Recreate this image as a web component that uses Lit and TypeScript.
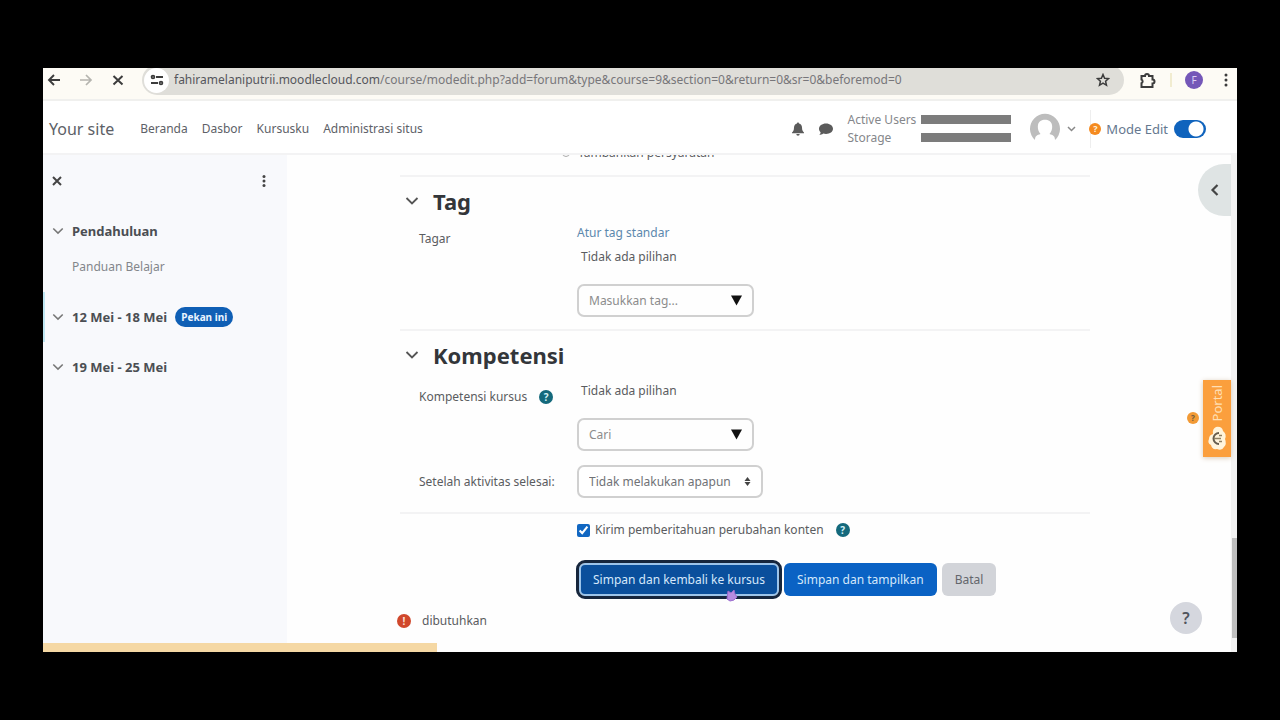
import { LitElement, html, css } from "lit";
import { customElement } from "lit/decorators.js";

const chevron = html`<svg class="chev" viewBox="0 0 14 14" aria-hidden="true"><path d="M1.5 4 7 9.5 12.5 4" fill="none" stroke="currentColor" stroke-width="1.8"/></svg>`;
const cross = html`<svg class="ic" viewBox="0 0 12 12" aria-hidden="true"><path d="M2 2l8 8M10 2l-8 8" fill="none" stroke="currentColor" stroke-width="2"/></svg>`;
const dots = html`<svg class="ic" viewBox="0 0 12 12" aria-hidden="true"><g fill="currentColor"><circle cx="6" cy="1.5" r="1.5"/><circle cx="6" cy="6" r="1.5"/><circle cx="6" cy="10.5" r="1.5"/></g></svg>`;

@customElement("browser-bar")
class BrowserBar extends LitElement {
  static styles = css`
    :host { display: block; }
    .bar { display: flex; align-items: center; height: 33px; padding: 0 4px 7px 4px; box-sizing: border-box; background: #fdfbf5; color: #3c3c3c; border-bottom: 2px solid #f0f0ee; }
    button { border: 0; background: none; padding: 0; color: inherit; display: grid; place-items: center; font: inherit; }
    .nav { display: flex; gap: 18px; }
    .dim { color: #b5b4af; }
    .ic { width: 14px; height: 14px; display: block; }
    .pill { flex: 1; min-width: 0; height: 30px; box-sizing: border-box; margin-left: 17px; padding: 0 14px 0 2px; display: flex; align-items: center; gap: 5px; background: #dfded9; border-radius: 15px; }
    .site { width: 25px; height: 25px; border-radius: 50%; background: #fff; }
    .url { flex: 1; min-width: 0; font: 12px/18px "Noto Sans", "Open Sans", sans-serif; color: #77767a; white-space: nowrap; overflow: hidden; }
    .host { color: #55565c; }
    .tools { display: flex; align-items: center; padding-left: 15px; }
    .big { width: 17px; height: 17px; display: block; }
    .sep { width: 2px; height: 14px; margin: 0 13px 0 14px; background: #f1ecd0; }
    .me { width: 18px; height: 18px; border-radius: 50%; background: #7457b8; color: #ddd0f5; font: 10px/18px "Noto Sans", sans-serif; }
    .more { margin-left: 16px; }
  `;
  render() {
    return html`<div class="bar">
      <div class="nav">
        <button aria-label="Kembali"><svg class="ic" viewBox="0 0 14 14"><path d="M13 7H2M7 2 2 7l5 5" fill="none" stroke="currentColor" stroke-width="1.9"/></svg></button>
        <button class="dim" aria-label="Maju"><svg class="ic" viewBox="0 0 14 14"><path d="M1 7h11M7 2l5 5-5 5" fill="none" stroke="currentColor" stroke-width="1.7"/></svg></button>
        <button aria-label="Hentikan"><svg class="ic" viewBox="0 0 14 14"><path d="M2.5 3l9 8.5M11.5 3l-9 8.5" fill="none" stroke="currentColor" stroke-width="2"/></svg></button>
      </div>
      <div class="pill">
        <button class="site" aria-label="Info situs"><svg class="ic" viewBox="0 0 14 14"><g fill="none" stroke="currentColor" stroke-width="1.8"><path d="M6 4h7M1 10h7"/><circle cx="3" cy="4" r="1.4"/><circle cx="11" cy="10" r="1.4"/></g></svg></button>
        <div class="url"><span class="host">fahiramelaniputrii.moodlecloud.com</span>/course/modedit.php?add=forum&amp;type&amp;course=9&amp;section=0&amp;return=0&amp;sr=0&amp;beforemod=0</div>
        <button aria-label="Bookmark"><svg class="ic" viewBox="0 0 14 14"><path d="M7 1.5l1.600 3.700 4 .4-3 2.700.9 4L7 10.200l-3.500 2.100.9-4-3-2.700 4-.4z" fill="none" stroke="currentColor" stroke-width="1.5"/></svg></button>
      </div>
      <div class="tools">
        <button aria-label="Ekstensi"><svg class="big" viewBox="0 0 17 17"><path d="M2.500 4h3.500a2 2 0 0 1 4 0h3.500v3.500a2 2 0 0 1 0 4v3.500h-11v-3.800a2 2 0 0 0 0-3.600z" fill="none" stroke="currentColor" stroke-width="2"/></svg></button>
        <span class="sep"></span>
        <button class="me" aria-label="Profil">F</button>
        <button class="more" aria-label="Menu"><svg class="ic" viewBox="0 0 14 14"><g fill="currentColor"><circle cx="7" cy="2" r="1.5"/><circle cx="7" cy="7" r="1.5"/><circle cx="7" cy="12" r="1.5"/></g></svg></button>
      </div>
    </div>`;
  }
}

@customElement("site-header")
class SiteHeader extends LitElement {
  static styles = css`
    :host { display: block; }
    header { display: flex; align-items: center; height: 54px; box-sizing: border-box; padding: 3px 31px 0 6px; background: #fff; border-bottom: 2px solid #f3f3f4; color: #5d6167; font: 12px/18px "Noto Sans", "Open Sans", sans-serif; }
    a { color: inherit; text-decoration: none; }
    .brand { font-size: 16px; margin-right: 26px; }
    nav { display: flex; gap: 14px; flex: 1; }
    button { border: 0; background: none; padding: 0; color: #5b5b5b; display: grid; place-items: center; }
    .icons { display: flex; gap: 14px; margin-right: 15px; }
    .ic { width: 14px; height: 14px; display: block; }
    .stats { display: grid; grid-template-columns: auto 90px; column-gap: 5px; align-items: center; color: #85878b; }
    .meter { height: 9px; background: #7c7c7c; }
    .user { display: flex; align-items: center; gap: 6px; margin: 0 14px 0 18px; }
    .avatar { width: 32px; height: 32px; display: block; }
    .small { width: 9px; height: 9px; display: block; }
    .edit { display: flex; align-items: center; height: 38px; border-left: 1px solid #eee; color: #66788f; font-size: 13px; }
    .mark { width: 12px; height: 12px; margin: 0 5px 0 -2px; border-radius: 50%; background: #f58a1f; color: #fff2dc; font: bold 9px/12px "Noto Sans", sans-serif; text-align: center; }
    .switch { appearance: none; margin: 0 0 0 6px; width: 32px; height: 18px; border-radius: 9px; background: radial-gradient(circle at 22px 9px, #fff 7px, transparent 8px), #0f63bd; }
  `;
  render() {
    return html`<header>
      <a class="brand" href="#">Your site</a>
      <nav><a href="#">Beranda</a><a href="#">Dasbor</a><a href="#">Kursusku</a><a href="#">Administrasi situs</a></nav>
      <div class="icons">
        <button aria-label="Notifikasi"><svg class="ic" viewBox="0 0 14 14"><path d="M7 .5c.7 0 1 .5 1 1 2 .5 3 2.200 3 4 0 3 1 4 2 5v.8H1v-.8c1-1 2-2 2-5 0-1.800 1-3.500 3-4 0-.5.300-1 1-1zM5.300 12h3.400a1.700 1.700 0 0 1-3.400 0z" fill="currentColor"/></svg></button>
        <button aria-label="Pesan"><svg class="ic" viewBox="0 0 14 14"><path d="M7 1.500c4 0 7 2.300 7 5.300s-3 5.200-7 5.200c-1 0-1.900-.1-2.700-.4C3 12.600 1.500 13 .3 13c1-1 1.300-2 1.300-2.700C.6 9.400 0 8.200 0 6.800c0-3 3-5.300 7-5.300z" fill="currentColor"/></svg></button>
      </div>
      <div class="stats"><span>Active Users</span><span class="meter"></span><span>Storage</span><span class="meter"></span></div>
      <button class="user" aria-label="Menu pengguna">
        <svg class="avatar" viewBox="0 0 32 32"><path d="M6 27A15 15 0 1 1 26 27C26 23 24 22 20.500 21 23 18 23.500 15 23 12c-1-7-13-7-14 0-.5 3 0 6 2.500 9C8 22 6 23 6 27z" fill="#bdbdbd"/></svg>
        <svg class="small" viewBox="0 0 9 9"><path d="M1 3l3.500 3.500L8 3" fill="none" stroke="#888" stroke-width="1.5"/></svg>
      </button>
      <div class="edit"><span class="mark">?</span><label for="mode">Mode Edit</label><input id="mode" class="switch" type="checkbox" role="switch" checked></div>
    </header>`;
  }
}

@customElement("course-index")
class CourseIndex extends LitElement {
  static styles = css`
    :host { display: block; background: #f8f9fc; color: #4b4e53; font: 13px/20px "Noto Sans", "Open Sans", sans-serif; }
    .top { display: flex; justify-content: space-between; padding: 17px 17px 31px 8px; }
    button { border: 0; background: none; padding: 0; color: #444; display: grid; place-items: center; }
    .ic { width: 12px; height: 12px; display: block; margin: 3px 0; }
    .row { display: flex; align-items: center; gap: 8px; font-weight: 700; padding-left: 9px; height: 20px; }
    .chev { width: 12px; height: 12px; display: block; color: #777; }
    a { color: inherit; text-decoration: none; }
    .item { display: block; padding: 16px 0 0 29px; color: #83868b; font-size: 12px; }
    .current { margin: 15px 0; padding: 15px 0 15px 7px; border-left: 2px solid #bfe6f2; }
    .badge { background: #0f5fb5; color: #eaf4ff; font-size: 10px; line-height: 20px; padding: 0 6px; border-radius: 10px; }
  `;
  render() {
    return html`<div class="top"><button aria-label="Tutup">${cross}</button><button aria-label="Opsi">${dots}</button></div>
      <div class="row"><button aria-label="Ciutkan">${chevron}</button><a href="#">Pendahuluan</a></div>
      <a class="item" href="#">Panduan Belajar</a>
      <div class="row current"><button aria-label="Ciutkan">${chevron}</button><a href="#">12 Mei - 18 Mei</a><span class="badge">Pekan ini</span></div>
      <div class="row"><button aria-label="Ciutkan">${chevron}</button><a href="#">19 Mei - 25 Mei</a></div>`;
  }
}

@customElement("activity-form")
class ActivityForm extends LitElement {
  static styles = css`
    :host { display: block; min-width: 0; color: #5a5c60; font: 12px/20px "Noto Sans", "Open Sans", sans-serif; }
    form { margin: 0 141px 0 113px; }
    .cut { height: 20px; margin-left: 160px; display: flex; align-items: end; overflow: hidden; }
    .cutline { display: flex; align-items: center; gap: 8px; height: 44px; }
    .ring { width: 8px; height: 8px; box-sizing: border-box; border: 1px solid #aaa; border-radius: 50%; margin-left: 2px; }
    section { border-top: 2px solid #f3f3f4; }
    h2 { display: flex; align-items: center; gap: 14px; margin: 0; padding: 8px 0 4px 5px; font-size: 22px; line-height: 32px; font-weight: 700; color: #33363a; }
    h2 button, .help { border: 0; padding: 0; background: none; display: grid; place-items: center; }
    .chev { width: 14px; height: 14px; display: block; color: #555; }
    .row { display: grid; grid-template-columns: 158px minmax(0, 1fr); padding-left: 19px; }
    .name { display: flex; align-items: center; gap: 12px; height: 36px; }
    .help { width: 14px; height: 14px; border-radius: 50%; background: #14697c; color: #d3f1f7; font: bold 10px/14px "Noto Sans", sans-serif; }
    .none { padding-left: 4px; line-height: 24px; margin-bottom: 15px; }
    a { display: block; color: #5c88ad; text-decoration: none; line-height: 24px; }
    .field { display: flex; align-items: center; width: 177px; height: 33px; box-sizing: border-box; border: 2px solid #d0d0d0; border-radius: 7px; padding: 0 10px; }
    .field input { flex: 1; min-width: 0; border: 0; outline: 0; padding: 0; background: none; font: inherit; color: inherit; }
    .field input::placeholder { color: #8c8c8c; opacity: 1; }
    .tri { width: 11px; height: 11px; display: block; color: #111; flex: none; }
    .pick { position: relative; justify-self: start; }
    select { appearance: none; display: block; width: 186px; height: 33px; box-sizing: border-box; border: 2px solid #d0d0d0; border-radius: 7px; background: #fff; padding: 0 10px; font: inherit; color: #707276; }
    .updown { position: absolute; right: 12px; top: 12px; width: 7px; height: 9px; pointer-events: none; }
    .notify { display: flex; align-items: center; padding-left: 177px; }
    .notify input { margin: 0 5px 0 0; width: 13px; height: 13px; accent-color: #1167c2; }
    .notify .help { margin-left: 12px; }
    .actions { display: flex; align-items: center; gap: 5px; padding: 23px 0 0 179px; }
    .btn { border: 0; border-radius: 6px; height: 33px; padding: 0 13px; font: inherit; background: #0a62c4; color: #d5e8fb; white-space: nowrap; }
    .focus { background: #0a4f9c; border: 2px solid #9cc4ea; outline: 3px solid #16263d; padding: 0 12px; }
    .grey { background: #d2d4d9; color: #63666c; }
    .req { display: flex; align-items: center; gap: 11px; padding-top: 15px; margin-left: -3px; }
    .alert { width: 14px; height: 14px; border-radius: 50%; background: #d0482c; color: #ffe1d8; font: bold 10px/14px "Noto Sans", sans-serif; text-align: center; }
    .tag { padding-bottom: 12px; }
    .comp { padding-bottom: 14px; }
    .skills { padding-top: 4px; padding-bottom: 14px; }
    .after .name { height: 33px; }
    .end { padding-top: 6px; }
  `;
  field(id: string, hint: string, label: string) {
    return html`<div class="field"><input id=${id} placeholder=${hint} aria-label=${label}><svg class="tri" viewBox="0 0 11 11"><path d="M0 .5h11L5.500 10.500z" fill="currentColor"/></svg></div>`;
  }
  render() {
    return html`<form @submit=${(e: Event) => e.preventDefault()}>
      <div class="cut"><div class="cutline"><span class="ring"></span><span>Tambahkan persyaratan</span></div></div>
      <section class="tag">
        <h2><button type="button" aria-label="Ciutkan">${chevron}</button>Tag</h2>
        <div class="row"><label class="name" for="tags">Tagar</label>
          <div><a href="#">Atur tag standar</a><div class="none">Tidak ada pilihan</div>${this.field("tags", "Masukkan tag...", "Tagar")}</div></div>
      </section>
      <section class="comp">
        <h2><button type="button" aria-label="Ciutkan">${chevron}</button>Kompetensi</h2>
        <div class="row skills"><div class="name"><label for="skills">Kompetensi kursus</label><button class="help" type="button" aria-label="Bantuan">?</button></div>
          <div><div class="none">Tidak ada pilihan</div>${this.field("skills", "Cari", "Kompetensi kursus")}</div></div>
        <div class="row after"><label class="name" for="after">Setelah aktivitas selesai:</label>
          <div class="pick"><select id="after"><option>Tidak melakukan apapun</option></select><svg class="updown" viewBox="0 0 7 9"><path d="M3.500 0 6.500 4h-6zM3.500 9 .5 5h6z" fill="#444"/></svg></div></div>
      </section>
      <section class="end">
        <div class="notify"><input id="notify" type="checkbox" checked><label for="notify">Kirim pemberitahuan perubahan konten</label><button class="help" type="button" aria-label="Bantuan">?</button></div>
        <div class="actions"><button class="btn focus">Simpan dan kembali ke kursus</button><button class="btn">Simpan dan tampilkan</button><button class="btn grey" type="button">Batal</button></div>
        <div class="req"><span class="alert">!</span>dibutuhkan</div>
      </section>
    </form>`;
  }
}

@customElement("app-root")
class AppRoot extends LitElement {
  static styles = css`
    :host { display: flex; box-sizing: border-box; height: 100vh; padding: 68px 43px; background: #000; }
    .frame { position: relative; flex: 1; min-width: 0; display: flex; flex-direction: column; background: #fefefe; overflow: hidden; }
    .page { flex: 1; min-height: 0; display: grid; grid-template-columns: 244px minmax(0, 1fr) 6px; overflow: hidden; }
    .track { background: #f3f3f3; }
    .thumb { position: absolute; right: 0; bottom: 14px; width: 5px; height: 100px; background: #bfbfbf; }
    button { border: 0; padding: 0; }
    .drawer { position: absolute; right: 6px; top: 96px; width: 33px; height: 52px; border-radius: 26px 0 0 26px; background: #dfe4e4; color: #444; display: grid; place-items: center; }
    .drawer svg { width: 12px; height: 14px; }
    .help { position: absolute; right: 35px; bottom: 18px; width: 32px; height: 32px; border-radius: 50%; background: #d5d7de; color: #50545c; font: 600 16px/32px "Noto Sans", sans-serif; }
    .portal { position: absolute; right: 6px; top: 312px; width: 28px; height: 77px; background: #fb9f3d; color: #ffdfb4; display: flex; flex-direction: column; align-items: center; justify-content: space-between; padding: 5px 0; box-sizing: border-box; box-shadow: 0 1px 5px #d9c9b5; }
    .word { writing-mode: vertical-rl; transform: rotate(180deg); font: 13px/16px "Noto Sans", sans-serif; }
    .portal svg { width: 22px; height: 27px; }
    .dot { position: absolute; right: 38px; top: 344px; width: 12px; height: 12px; border-radius: 50%; background: #f29a35; color: #6d5a42; font: bold 8px/12px "Noto Sans", sans-serif; text-align: center; }
    .status { position: absolute; left: 0; bottom: 0; width: 394px; height: 9px; background: #f5d8a4; }
    .pointer { position: absolute; left: 682px; top: 521px; width: 13px; height: 13px; pointer-events: none; }
  `;
  render() {
    return html`<div class="frame">
      <browser-bar></browser-bar>
      <site-header></site-header>
      <div class="page"><course-index></course-index><activity-form></activity-form><div class="track"></div></div>
      <span class="thumb"></span>
      <button class="drawer" aria-label="Buka laci blok"><svg viewBox="0 0 12 14"><path d="M8.500 2 3.500 7l5 5" fill="none" stroke="currentColor" stroke-width="2.2"/></svg></button>
      <button class="help" aria-label="Bantuan">?</button>
      <span class="dot">?</span>
      <button class="portal"><span class="word">Portal</span><svg viewBox="0 0 22 27"><path d="M10 2q6-1 7 4 4 3 2 8 2 5-1 8-2 4-7 2-5 1-6-4-4-2-2-6 0-4 4-5-1-5 3-7z" fill="#fff4dc"/><path d="M13 8a5.500 5.500 0 0 0 0 11" fill="none" stroke="#665c4d" stroke-width="2"/><path d="M8 13.500h7M13 10.500h3M13 16.500h3" fill="none" stroke="#8f8064" stroke-width="1.5"/></svg></button>
      <div class="status"></div>
      <svg class="pointer" viewBox="0 0 13 13"><path d="M3 2l3 2 3-3 1 4 2 3-3 3-4 1-3-2z" fill="#b78ce0" stroke="#9a6bcf"/></svg>
    </div>`;
  }
}
